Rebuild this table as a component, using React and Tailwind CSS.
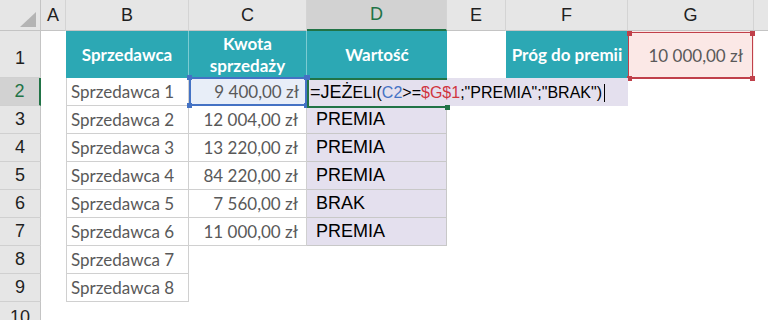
import React from "react";

const rows = [
  ["Sprzedawca 1", "9 400,00 zł", null],
  ["Sprzedawca 2", "12 004,00 zł", "PREMIA"],
  ["Sprzedawca 3", "13 220,00 zł", "PREMIA"],
  ["Sprzedawca 4", "84 220,00 zł", "PREMIA"],
  ["Sprzedawca 5", "7 560,00 zł", "BRAK"],
  ["Sprzedawca 6", "11 000,00 zł", "PREMIA"],
  ["Sprzedawca 7", null, null],
  ["Sprzedawca 8", null, null],
];

const head = "font-['Liberation_Sans',Arial,sans-serif] text-[18px] text-[#1f1f1f]";
const calibri = "font-['Lato','Open_Sans',sans-serif]";
const title = `bg-[#2ca8b4] text-white font-bold text-[17px] ${calibri}`;
const data = `text-[17px] text-[#595959] ${calibri}`;

function Handle({ className }) {
  return <span className={`absolute w-[5px] h-[5px] ${className}`} />;
}

function ColHead({ label, active }) {
  return (
    <div
      className={`flex items-center justify-center border-r border-[#d4d4d4] ${head} ${
        active
          ? "bg-[#d2d2d2] border-b-2 border-b-[#217346] text-[#217346]"
          : "bg-[#e6e6e6] border-b border-b-[#c4c4c4]"
      }`}
    >
      {label}
    </div>
  );
}

function RowHead({ n, active, bottom }) {
  return (
    <div
      className={`flex justify-center border-b border-[#d0d0d0] ${head} ${
        bottom ? "items-end pb-[5px]" : "items-center"
      } ${
        active
          ? "bg-[#d2d2d2] border-r-2 border-r-[#217346] text-[#217346]"
          : "bg-[#e6e6e6] border-r border-r-[#c4c4c4]"
      }`}
    >
      {n}
    </div>
  );
}

export default function App() {
  return (
    <div className="w-[768px] h-[320px] overflow-hidden bg-white">
      <div className="grid grid-cols-[41px_25px_123px_118px_140px_59px_122px_126px_1fr] grid-rows-[31px_47px_repeat(8,28px)_28px]">
        {/* corner */}
        <div className="relative bg-[#e6e6e6] border-r border-b border-[#c4c4c4]">
          <svg className="absolute left-[19px] top-[12px]" width="18" height="16" viewBox="0 0 18 16">
            <polygon points="17,0 17,15 1,15" fill="#b4b4b4" />
          </svg>
        </div>
        <ColHead label="A" />
        <ColHead label="B" />
        <ColHead label="C" />
        <ColHead label="D" active />
        <ColHead label="E" />
        <ColHead label="F" />
        <ColHead label="G" />
        <div className="bg-[#e6e6e6] border-b border-[#c4c4c4]" />

        {/* row 1 */}
        <RowHead n="1" bottom />
        <div />
        <div className={`flex items-center justify-center border-r border-[#7ccbd2] ${title}`}>
          Sprzedawca
        </div>
        <div className={`flex items-center justify-center text-center leading-[22px] border-r border-[#7ccbd2] ${title}`}>
          Kwota<br />sprzedaży
        </div>
        <div className={`flex items-center justify-center ${title}`}>Wartość</div>
        <div />
        <div className={`flex items-center justify-center ${title}`}>Próg do premii</div>
        <div className="relative flex items-center justify-end pr-[11px] pt-[2px] bg-[#fbe8e6]">
          <span className={data}>10 000,00 zł</span>
          <div className="absolute left-0 top-[1px] right-[1px] bottom-[-1px] border border-b-2 border-[#c0404a]" />
          <Handle className="bg-[#c0404a] left-[-1px] top-0" />
          <Handle className="bg-[#c0404a] right-[-1px] top-0" />
          <Handle className="bg-[#c0404a] left-[-1px] bottom-[-3px]" />
          <Handle className="bg-[#c0404a] right-[-1px] bottom-[-3px]" />
        </div>
        <div />

        {rows.map(([name, amount, result], i) => {
          const r = i + 2;
          return (
            <React.Fragment key={r}>
              <RowHead n={r} active={r === 2} />
              <div />
              <div className={`flex items-center pl-[4px] border-l border-r border-b border-[#d0d0d0] ${data}`}>
                {name}
              </div>
              {r === 2 ? (
                <div className="relative flex items-center justify-end pr-[8px] bg-[#e8eef8]">
                  <span className={data}>{amount}</span>
                  <div className="absolute left-0 right-0 top-[-1px] bottom-0 border-2 border-[#4472c4]" />
                  <Handle className="bg-[#4472c4] left-[-2px] top-[-3px]" />
                  <Handle className="bg-[#4472c4] right-[-2px] top-[-3px]" />
                  <Handle className="bg-[#4472c4] left-[-2px] bottom-[-2px]" />
                  <Handle className="bg-[#4472c4] right-[-2px] bottom-[-2px]" />
                </div>
              ) : amount ? (
                <div className={`flex items-center justify-end pr-[8px] border-r border-b border-[#d0d0d0] ${data}`}>
                  {amount}
                </div>
              ) : (
                <div />
              )}
              {r === 2 ? (
                <>
                  <div className="relative col-span-3 flex items-center pl-[3px] bg-[#e4e0ee]">
                    <div className="absolute left-0 top-0 w-[140px] bottom-[-2px] border-l-2 border-t-2 border-b-2 border-[#217346]" />
                    <Handle className="bg-[#217346] left-[138px] bottom-[-4px]" />
                    <Handle className="bg-[#4472c4] left-[-2px] top-[-3px]" />
                    <span className="relative font-['Liberation_Sans',Arial,sans-serif] text-[16px] text-black whitespace-nowrap">
                      <span className="text-[18px]">=JEŻ</span>
                      ELI(
                      <span className="text-[#4472c4]">C2</span>
                      {">="}
                      <span className="text-[#d0363f]">$G$1</span>
                      ;"PREMIA";"BRAK")
                      <span className="inline-block align-middle ml-[2px] w-px h-[18px] bg-black" />
                    </span>
                  </div>
                  <div />
                  <div />
                </>
              ) : (
                <>
                  {result ? (
                    <div className="flex items-center pl-[9px] bg-[#e4e0ee] border-r border-b border-[#c8c8c8] font-['Liberation_Sans',Arial,sans-serif] text-[18px] text-black">
                      {result}
                    </div>
                  ) : (
                    <div />
                  )}
                  <div />
                  <div />
                  <div />
                  <div />
                </>
              )}
            </React.Fragment>
          );
        })}

        {/* row 10, cut off by the window */}
        <div className={`flex justify-center items-start pt-[2px] bg-[#e6e6e6] border-r border-[#c4c4c4] ${head}`}>10</div>
        <div className="col-span-8" />
      </div>
    </div>
  );
}
